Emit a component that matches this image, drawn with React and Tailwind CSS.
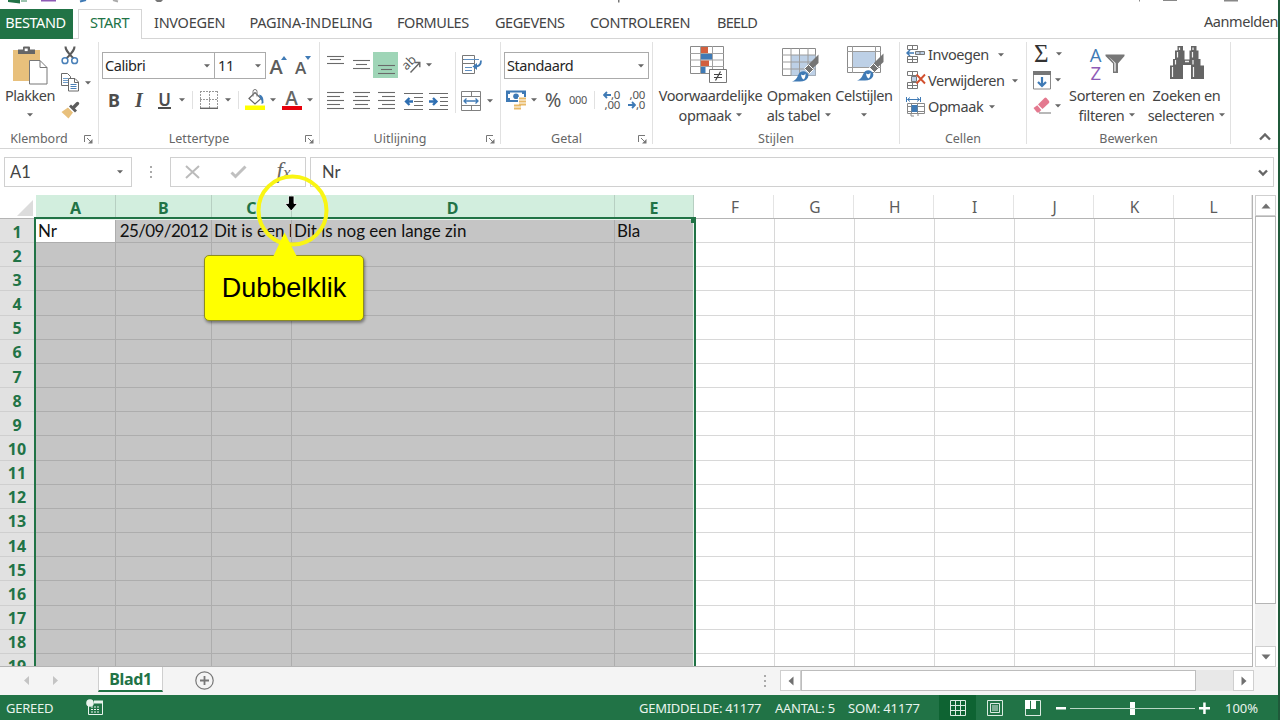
import clsx from "clsx";

const columns = [
    { name: "A", width: "w-20", selected: true },
    { name: "B", width: "w-24", selected: true },
    { name: "C", width: "w-20", selected: true },
    { name: "D", width: "w-[323px]", selected: true },
    { name: "E", width: "w-20", selected: true },
    { name: "F", width: "w-20" },
    { name: "G", width: "w-20" },
    { name: "H", width: "w-20" },
    { name: "I", width: "w-20" },
    { name: "J", width: "w-20" },
    { name: "K", width: "w-20" },
    { name: "L", width: "w-[78px]" },
];

const firstRow = {
    A: "Nr",
    B: "25/09/2012",
    C: "Dit is een lange zin",
    D: "Dit is nog een lange zin",
    E: "Bla",
};

const rows = Array.from({ length: 19 }, (_, i) => i + 1);

const tabs = [
    { label: "INVOEGEN", style: "ml-3 w-[73px] tracking-[-0.02em]" },
    { label: "PAGINA-INDELING", style: "ml-[22.5px] w-[124px] tracking-[-0.015em]" },
    { label: "FORMULES", style: "ml-[23.5px] w-[74px]" },
    { label: "GEGEVENS", style: "ml-6 w-[71px]" },
    { label: "CONTROLEREN", style: "ml-6 w-[103px] tracking-[-0.02em]" },
    { label: "BEELD", style: "ml-[24px] w-[41px] tracking-[-0.05em]" },
];

function Caret({ className }) {
    return (
        <svg width="6" height="4" viewBox="0 0 6 4" className={clsx("shrink-0", className)}>
            <path d="M0 0.3h6L3 3.6z" fill="#666" />
        </svg>
    );
}

function Slot({ w, className, children }) {
    return <div className={clsx("flex shrink-0 items-center justify-center", w, className)}>{children}</div>;
}

function Divider({ className }) {
    return <div className={clsx("w-px shrink-0 bg-[#e1e1e1]", className)} />;
}

function Group({ label, width, launcher, children }) {
    return (
        <div className={clsx("flex shrink-0 items-start", width)}>
            <div className="flex h-[109px] min-w-0 flex-1 flex-col">
                <div className="h-[90px]">{children}</div>
                <div className={clsx("flex h-5 items-center pt-[2px] text-[12.5px] text-[#666]", launcher && "pr-[5px]")}>
                    <span className={clsx("flex-1 text-center", launcher && "pr-[6px]")}>{label}</span>
                    {launcher && (
                        <svg width="9" height="9" viewBox="0 0 9 9" fill="none" stroke="#777">
                            <path d="M0.5 7V0.5H7M3 3l4.5 4.5" />
                            <path d="M8.5 4v4.5H4z" fill="#777" stroke="none" />
                        </svg>
                    )}
                </div>
            </div>
            <Divider className="mt-[3px] h-[102px]" />
        </div>
    );
}

function Lines({ rows, height = 20 }) {
    return (
        <svg width="18" height={height} viewBox={`0 0 18 ${height}`} stroke="#6a6a6a" strokeWidth="1.1">
            {rows.map(([x1, x2, y]) => (
                <path key={y} d={`M${x1} ${y}H${x2}`} />
            ))}
        </svg>
    );
}

function PasteIcon() {
    return (
        <svg width="36" height="39" viewBox="0 0 36 39">
            <path d="M1 4h27v31H1z" fill="#e8c07c" />
            <path d="M6 3.5h5V1.5Q11 0.5 12 0.5h5q1 0 1 1v2h5V8H6z" fill="#666" />
            <path d="M12.7 2.5h3v2.6h-3z" fill="#fff" />
            <path d="M17.5 14.5h10.5l7 7v16.5H17.5z" fill="#fff" stroke="#777" />
            <path d="M28 14.5v7h7" fill="none" stroke="#777" />
        </svg>
    );
}

function ScissorsIcon() {
    return (
        <svg width="18" height="19" viewBox="0 0 18 19" fill="none">
            <path d="M4.5 0.5c0 4 2.5 6 8 12M13.5 0.5c0 4-2.5 6-8 12" stroke="#5a5a5a" strokeWidth="2.1" />
            <circle cx="4" cy="14.7" r="2.9" stroke="#4a80b8" strokeWidth="1.5" />
            <circle cx="13.6" cy="14.7" r="2.9" stroke="#4a80b8" strokeWidth="1.5" />
        </svg>
    );
}

function CopyIcon() {
    return (
        <svg width="18" height="19" viewBox="0 0 18 19" fill="#fff" stroke="#6b6b6b">
            <path d="M0.5 0.5h6l3 3v9h-9z" />
            <path d="M2 5.5h5M2 7.5h5M2 9.5h5" stroke="#6f9cc8" />
            <path d="M7.5 5.5h6.5l3.5 3.5v9h-10z" />
            <path d="M13.5 5.5v4h4" fill="none" />
            <path d="M9.5 11.5h6M9.5 13.5h6M9.5 15.5h6" stroke="#4a80b8" />
        </svg>
    );
}

function BrushIcon() {
    return (
        <svg width="19" height="18" viewBox="0 0 19 18">
            <path d="M0.5 11L7 6.500l5 5L7.500 17.500z" fill="#e8c07c" />
            <path d="M8 5.500l2-2 6 6-2 2z" fill="#5c5c5c" />
            <path d="M12.500 6.500L16.500 2.500" stroke="#5c5c5c" strokeWidth="3.4" strokeLinecap="round" />
            <path d="M7.200 6.200l5.800 5.800" stroke="#fff" />
        </svg>
    );
}

function FontSizeIcon({ down }) {
    return (
        <div className="flex items-start font-['Open_Sans',sans-serif] text-[#5c5c5c]">
            <span className={clsx("font-semibold", down ? "pt-[5px] text-[17px] leading-4" : "pt-[2px] text-[20px] leading-5")}>A</span>
            <svg width="6" height="4" viewBox="0 0 6 4" className={down ? "mt-[1px] -ml-px" : "mt-[1px] -ml-[2px]"}>
                <path d={down ? "M0 0h6L3 4z" : "M0 4h6L3 0z"} fill="#3f7ab5" />
            </svg>
        </div>
    );
}

function BordersIcon() {
    return (
        <svg width="18" height="18" viewBox="0 0 18 18" fill="none" stroke="#999">
            <path d="M0.5 0v17M17.5 0v17M0 0.5h18M9.5 0v17M0 8.5h18" strokeDasharray="2 1" />
            <path d="M0 17.3h18" strokeWidth="1.4" stroke="#666" />
        </svg>
    );
}

function FillIcon() {
    return (
        <svg width="20" height="20" viewBox="0 0 20 20" className="overflow-visible">
            <path d="M0 15.5h20V20H0z" fill="#ff0" />
            <path d="M4 8.5L10 2.5l6 6-6 5.5z" fill="#fff" stroke="#666" strokeWidth="1.2" />
            <path d="M8 6.5V1.5q0-2 2-2t2 2v5" fill="none" stroke="#777" />
            <path d="M14 4.5q5 0.5 4.5 8.5l-2 1q0.5-4-1.5-6z" fill="#3f7ab5" />
        </svg>
    );
}

function FontColorIcon() {
    return (
        <div className="flex w-5 flex-col items-center">
            <span className="font-['Open_Sans',sans-serif] text-[19px] leading-4 font-semibold text-[#666]">A</span>
            <div className="h-[4px] w-5 bg-red-600" />
        </div>
    );
}

function OrientationIcon() {
    return (
        <svg width="20" height="20" viewBox="0 0 20 20" fill="none" stroke="#666" className="overflow-visible">
            <text x="-0.5" y="12" fontSize="12.5" fill="#555" stroke="none" fontFamily="Open Sans" transform="rotate(-45 6 9)">
                ab
            </text>
            <path d="M7.5 17.5L16.5 8M12 7.5h4.8v4.8" strokeWidth="1.4" />
        </svg>
    );
}

function WrapIcon() {
    return (
        <svg width="21" height="20" viewBox="0 0 21 20" fill="none" stroke="#777">
            <path d="M1.5 0.5h12v4h-12zM1.5 4.5h12v4h-12zM1.5 8.5h12v10h-12z" />
            <path d="M3 4.5h15M4 12.5h7M4 15.5h7" stroke="#5e8fc2" />
            <path d="M20 5.5q0 6-6 6" stroke="#3f7ab5" strokeWidth="1.8" />
            <path d="M16 8v7l-4.5-3.5z" fill="#3f7ab5" stroke="none" />
        </svg>
    );
}

function MergeIcon() {
    return (
        <svg width="20" height="20" viewBox="0 0 20 20" fill="none" stroke="#808080">
            <path d="M0.5 0.5h19v19H0.5zM0 5.5h20M0 14.5h20M10.5 0v5M10.5 15v5" />
            <path d="M3 10h14M5.5 7.5L3 10l2.5 2.5M14.5 7.5L17 10l-2.5 2.5" stroke="#3f7ab5" strokeWidth="1.3" />
        </svg>
    );
}

function IndentIcon({ right }) {
    return (
        <svg width="19" height="19" viewBox="0 0 19 19" fill="none" stroke="#6a6a6a">
            <path
                d={
                    right
                        ? "M0 1.5h19M11 5.5h8M11 9.5h8M11 13.5h8M0 17.5h19"
                        : "M0 1.5h19M10 5.5h9M10 9.5h9M10 13.5h9M0 17.5h19"
                }
            />
            <path d={right ? "M0 9.5h7M4 6l3.5 3.5L4 13" : "M2 9.5h7M5.5 6L2 9.5 5.5 13"} stroke="#2f6fb2" strokeWidth="2.3" />
        </svg>
    );
}

function MoneyIcon() {
    return (
        <svg width="21" height="20" viewBox="0 0 21 20">
            <path d="M1 1.5h18v9.5H1z" fill="#fff" stroke="#3f7ab5" strokeWidth="2" />
            <circle cx="10" cy="6.2" r="2.8" fill="#3f7ab5" />
            <path d="M1 1h3v3H1zM16 1h3v3h-3zM1 8h3v3H1z" fill="#3f7ab5" />
            <path d="M12 7h9v9h-9zM7 13h9v7H7z" fill="#fff" />
            <path d="M13 8.5h7M13 11.5h7M13 14.5h7M8 15.5h7M8 18.5h7" stroke="#e8b968" strokeWidth="1.8" />
        </svg>
    );
}

function DecimalIcon({ less }) {
    return (
        <div className="flex w-[18px] flex-col text-[11.5px] leading-[10px] tracking-tight text-[#555]">
            <div className="flex items-center justify-end">
                {!less && <BlueArrow flip />}
                <span>{less ? ",00" : ",0"}</span>
            </div>
            <div className="flex items-center justify-end">
                {less && <BlueArrow />}
                <span>{less ? ",0" : ",00"}</span>
            </div>
        </div>
    );
}

function BlueArrow({ flip }) {
    return (
        <svg
            width="8"
            height="8"
            viewBox="0 0 8 8"
            fill="none"
            stroke="#3f7ab5"
            strokeWidth="1.8"
            className={clsx("shrink-0", flip && "rotate-180")}
        >
            <path d="M0 4h7M4 1l3 3-3 3" />
        </svg>
    );
}

function ConditionalIcon() {
    return (
        <svg width="38" height="38" viewBox="0 0 38 38" fill="none" stroke="#8a8a8a" className="mr-1">
            <path d="M0.5 0.5h33v27h-33z" fill="#fff" />
            <path d="M0 7.5h34M0 14h34M0 20.5h34M10.5 0v28M22.5 0v28" stroke="#a2a2a2" />
            <path d="M11 1h7v6h-7zM11 14.5h8v5.5h-8z" fill="#d2603f" stroke="none" />
            <path d="M11 8h11v5.5H11zM11 21h4.5v6H11z" fill="#3f7ab5" stroke="none" />
            <path d="M19.5 23.5h17v13h-17z" fill="#fff" stroke="#777" />
            <path d="M24 28.5h8M24 31.5h8M30.5 25.5l-5 9" stroke="#444" strokeWidth="1.2" />
        </svg>
    );
}

function PaintBrush() {
    return (
        <g stroke="none">
            <path d="M37.5 8.5v8.5L30.5 23.5l-4-4z" fill="#757575" />
            <path d="M27.5 18.5l5 5-4 4-5-5z" fill="#757575" stroke="#fff" />
            <path d="M11 35.5q4-1 6-6 2-5 7-4 4.5 2 3 6-2 4-8 4z" fill="#3f7ab5" />
            <path d="M20 28.5q3 2 4.5-1 0 5-2 6-2-1-2.5-5z" fill="#fff" />
        </g>
    );
}

function TableIcon() {
    return (
        <svg width="39" height="37" viewBox="0 0 39 37" fill="none" stroke="#8a8a8a" className="ml-[3px]">
            <path d="M1.5 2.5h33v27h-33z" fill="#fff" />
            <path d="M10 9h24.5v20.5H10z" fill="#bdd0e6" stroke="none" />
            <path d="M1 9h34M1 16h34M1 23h34M10 2v28M18.5 2v28M27 2v28" stroke="#9c9c9c" />
            <PaintBrush />
        </svg>
    );
}

function CellStyleIcon() {
    return (
        <svg width="39" height="37" viewBox="0 0 39 37" fill="none" stroke="#8a8a8a" className="ml-[2px]">
            <path d="M1.5 0.5h33v26h-33z" fill="#fff" />
            <path d="M1 5.5h34M1 21.5h34M6.5 0v27M29.5 0v27" stroke="#9c9c9c" />
            <path d="M7 6h22v15H7z" fill="#bdd0e6" stroke="none" />
            <g transform="translate(0 -1)">
                <PaintBrush />
            </g>
        </svg>
    );
}

function InsertIcon() {
    return (
        <svg width="20" height="19" viewBox="0 0 20 19" fill="none" stroke="#777">
            <path d="M1.5 0.5h10v4h-10zM6.5 0v4M1.5 11.5h10v6h-10zM6.5 11v7M1.5 14.5h10" />
            <path d="M9.5 6.5h9v3h-9zM14 6v4" fill="#bdd0e6" />
            <path d="M1 8h7M4 5L1 8l3 3" stroke="#3f7ab5" strokeWidth="1.5" />
        </svg>
    );
}

function DeleteIcon() {
    return (
        <svg width="20" height="19" viewBox="0 0 20 19" fill="none" stroke="#777">
            <path d="M1.5 0.5h10v4h-10zM6.5 0v4M1.5 11.5h10v6h-10zM6.5 11v7M1.5 14.5h10" />
            <path d="M5.5 5.5h5v5h-5z" fill="#bdd0e6" />
            <path d="M10.5 3.5l8.5 9M19 3.5l-8.5 9" stroke="#d2502f" strokeWidth="1.9" />
        </svg>
    );
}

function FormatIcon() {
    return (
        <svg width="20" height="20" viewBox="0 0 20 20" fill="none" stroke="#888">
            <path d="M1.5 2.5h12M4 0.5l-2.5 2 2.5 2M11 0.5l2.5 2-2.5 2M0.5 0v5M14.5 0v5" stroke="#3f7ab5" />
            <path d="M1.5 6.5h17v10h-17zM5.5 6v11M11.5 6v11M1 9.5h18M1 14.5h18M5 17v2h3M12 17v2" />
            <path d="M5.5 8h6v7h-6z" fill="#3f7ab5" stroke="none" />
        </svg>
    );
}

function SortIcon() {
    return (
        <div className="flex h-[35px] w-[37px] gap-[2px]">
            <div className="flex w-[14px] flex-col items-center font-['Open_Sans',sans-serif] text-[18.5px] leading-[17.5px] font-medium">
                <span className="text-[#3f7ab5]">A</span>
                <span className="text-[#8e5bb5]">Z</span>
            </div>
            <svg width="20" height="20" viewBox="0 0 20 20" className="mt-[8px]">
                <path d="M0.5 0.5h19v1.5l-6.5 7.5v9.5H8V9.5L0.5 2z" fill="#777" />
                <path d="M3.5 2.5l5.8 6.5v8.5h1.4V9z" fill="#eee" />
            </svg>
        </div>
    );
}

function BinocularsIcon() {
    return (
        <svg width="36" height="34" viewBox="0 0 36 34" fill="#656565">
            <path d="M8.5 0h5.5v4.5h1.5v9h5v-9H22V0h5.5v4.5h2v8.5h2v6.5H35V33H22V19h-8v14H1V19.5h3V13h2V4.5h2.5z" />
            <path
                d="M3.5 21v10M6.5 14v4.5M8.5 6v5.5M10.5 1.5V4M24.5 21v10M24 14v4.5M23.5 6v5.5M24 1.5V4"
                stroke="#f2f2f2"
                strokeWidth="1.2"
            />
            <path d="M16 15.5h4" stroke="#eee" strokeWidth="1.5" />
        </svg>
    );
}

function BigButton({ icon, first, second, className }) {
    return (
        <div className={clsx("flex flex-col items-center text-[14.5px] whitespace-nowrap", className)}>
            <div className="flex h-[40px] items-start">{icon}</div>
            <span className="-mt-px leading-5">{first}</span>
            <div className="flex h-5 items-center gap-[5px]">
                {second && <span className="leading-5">{second}</span>}
                <Caret />
            </div>
        </div>
    );
}

function Ribbon() {
    return (
        <div className="flex h-[110px] border-b border-[#d5d5d5] text-[#444]">
            <Group label="Klembord" width="w-[99px]" launcher>
                <div className="flex pt-[7px]">
                    <BigButton icon={<PasteIcon />} first="Plakken" className="w-[61px] pr-px tracking-[-0.03em]" />
                    <div className="flex flex-col items-start">
                        <ScissorsIcon />
                        <div className="mt-2 flex items-center gap-[6px]">
                            <CopyIcon />
                            <Caret />
                        </div>
                        <div className="mt-[9px]">
                            <BrushIcon />
                        </div>
                    </div>
                </div>
            </Group>
            <Group label="Lettertype" width="w-[221px]" launcher>
                <div className="flex pt-[13px] pl-[3px] text-[14.5px] text-[#262626]">
                    <div className="flex h-[27px] w-[113px] items-center justify-between border border-[#ababab] pr-1 pl-[2px] tracking-[-0.03em]">
                        Calibri <Caret />
                    </div>
                    <div className="-ml-px flex h-[27px] w-[52px] items-center justify-between border border-[#ababab] pr-1 pl-[3px] tracking-[-0.02em]">
                        11 <Caret />
                    </div>
                    <Slot w="w-[24px]">
                        <FontSizeIcon />
                    </Slot>
                    <Slot w="w-[26px]">
                        <FontSizeIcon down />
                    </Slot>
                </div>
                <div className="mt-[8px] flex h-[26px] items-center pl-[2px] text-[18px] text-[#4d4d4d]">
                    <Slot w="w-[26px]">
                        <b>B</b>
                    </Slot>
                    <Slot w="w-[24px]">
                        <i className="font-['Liberation_Serif',serif] text-[20px] font-bold">I</i>
                    </Slot>
                    <Slot w="w-[27px]">
                        <span className="border-b-2 border-[#4d4d4d] text-[17px] leading-[15px] font-semibold">U</span>
                    </Slot>
                    <Slot w="w-[8px]">
                        <Caret />
                    </Slot>
                    <Divider className="ml-[6px] h-[18px]" />
                    <Slot w="w-[32px]">
                        <BordersIcon />
                    </Slot>
                    <Slot w="w-[6px]">
                        <Caret />
                    </Slot>
                    <Divider className="ml-[7px] h-[18px]" />
                    <Slot w="w-[31px]">
                        <FillIcon />
                    </Slot>
                    <Slot w="w-[6px]">
                        <Caret />
                    </Slot>
                    <Slot w="w-[31px]">
                        <FontColorIcon />
                    </Slot>
                    <Slot w="w-[6px]">
                        <Caret />
                    </Slot>
                </div>
            </Group>
            <Group label="Uitlijning" width="w-[181px]" launcher>
                <div className="flex pt-[13px]">
                    <div className="flex w-[135px] flex-col">
                        <div className="flex h-[26px] items-center">
                            <Slot w="w-[28px]" className="pl-[2px]">
                                <Lines rows={[[1, 18, 4.5], [4, 15, 7.5], [1, 18, 11.5]]} height={26} />
                            </Slot>
                            <Slot w="w-[25px]">
                                <Lines rows={[[1, 18, 8.5], [4, 15, 12.5], [1, 18, 16.5]]} height={26} />
                            </Slot>
                            <Slot w="w-[25px]" className="h-[26px] bg-[#9fd5b7]">
                                <Lines rows={[[1, 18, 13.5], [4, 15, 17.5], [1, 18, 21.5]]} height={26} />
                            </Slot>
                            <Slot w="w-[29px]">
                                <OrientationIcon />
                            </Slot>
                            <Slot w="w-[4px]">
                                <Caret />
                            </Slot>
                        </div>
                        <div className="mt-[10px] flex h-[26px] items-center">
                            <Slot w="w-[28px]" className="pl-[2px]">
                                <Lines rows={[[1, 18, 1.5], [1, 14, 5.5], [1, 18, 9.5], [1, 14, 13.5], [1, 18, 17.5]]} />
                            </Slot>
                            <Slot w="w-[25px]">
                                <Lines rows={[[1, 18, 1.5], [3, 16, 5.5], [1, 18, 9.5], [3, 16, 13.5], [1, 18, 17.5]]} />
                            </Slot>
                            <Slot w="w-[25px]">
                                <Lines rows={[[1, 18, 1.5], [5, 18, 5.5], [1, 18, 9.5], [5, 18, 13.5], [1, 18, 17.5]]} />
                            </Slot>
                            <Slot w="w-[30px]">
                                <IndentIcon />
                            </Slot>
                            <Slot w="w-[20px]">
                                <IndentIcon right />
                            </Slot>
                        </div>
                    </div>
                    <Divider className="h-[61px]" />
                    <div className="flex flex-col pl-[5px]">
                        <div className="flex h-[26px] items-center">
                            <WrapIcon />
                        </div>
                        <div className="mt-[10px] flex h-[26px] items-center gap-[6px]">
                            <MergeIcon />
                            <Caret />
                        </div>
                    </div>
                </div>
            </Group>
            <Group label="Getal" width="w-[152px]" launcher>
                <div className="flex pt-[13px] pl-[3px]">
                    <div className="flex h-[27px] w-[145px] items-center justify-between border border-[#ababab] pr-1 pl-[2px] text-[14.5px] tracking-[-0.03em] text-[#262626]">
                        Standaard <Caret />
                    </div>
                </div>
                <div className="mt-[8px] flex h-[26px] items-center pl-[4px]">
                    <Slot w="w-[22px]">
                        <MoneyIcon />
                    </Slot>
                    <Slot w="w-[14px]">
                        <Caret />
                    </Slot>
                    <Slot w="w-[24px]" className="text-[20px] text-[#555]">
                        %
                    </Slot>
                    <Slot w="w-[26px]" className="text-[11px] tracking-[-0.03em] text-[#555]">
                        000
                    </Slot>
                    <Divider className="ml-[3px] h-[18px]" />
                    <Slot w="w-[32px]">
                        <DecimalIcon />
                    </Slot>
                    <Slot w="w-[18px]">
                        <DecimalIcon less />
                    </Slot>
                </div>
            </Group>
            <Group label="Stijlen" width="w-[247px]">
                <div className="flex pt-[7px] pl-[3px]">
                    <BigButton icon={<ConditionalIcon />} first="Voorwaardelijke" second="opmaak" className="w-[109px] tracking-[-0.027em]" />
                    <BigButton icon={<TableIcon />} first="Opmaken" second="als tabel" className="w-[68px] tracking-[-0.025em]" />
                    <BigButton icon={<CellStyleIcon />} first="Celstijlen" className="w-[62px] tracking-[-0.03em]" />
                </div>
            </Group>
            <Group label="Cellen" width="w-[127px]">
                <div className="flex flex-col gap-[6px] pt-[5.5px] pl-[6px] text-[14.5px] tracking-[-0.03em]">
                    <div className="flex h-5 items-center">
                        <InsertIcon />
                        <span className="ml-[2px] w-[70px]">Invoegen</span>
                        <Caret />
                    </div>
                    <div className="flex h-5 items-center">
                        <DeleteIcon />
                        <span className="ml-[2px] w-[84px]">Verwijderen</span>
                        <Caret />
                    </div>
                    <div className="flex h-5 items-center">
                        <FormatIcon />
                        <span className="ml-[2px] w-[61px]">Opmaak</span>
                        <Caret />
                    </div>
                </div>
            </Group>
            <Group label="Bewerken" width="w-[204px]">
                <div className="flex pt-[7px]">
                    <div className="-mt-[2px] flex w-[40px] flex-col gap-[6px] pl-[6px]">
                        <div className="flex h-5 items-center gap-[5px]">
                            <span className="w-[18px] pl-px font-['Liberation_Serif',serif] text-[25px] leading-5 font-medium text-[#333]">Σ</span>
                            <Caret />
                        </div>
                        <div className="flex h-5 items-center gap-[4px]">
                            <svg width="18" height="19" viewBox="0 0 18 19" fill="none">
                                <path d="M0.5 0.5h17v17.5h-17z" stroke="#888" />
                                <path d="M0 0h18v4H0z" fill="#777" />
                                <path d="M9 6v9M5 11l4 4 4-4" stroke="#3f7ab5" strokeWidth="2.2" />
                            </svg>
                            <Caret />
                        </div>
                        <div className="flex h-5 items-center gap-[4px]">
                            <svg width="18" height="18" viewBox="0 0 18 18">
                                <path d="M5 7.5L11.5 1q1-1 2 0l2.5 3q0.700 1 0 2L9.5 12z" fill="#e4798f" />
                                <path d="M0.5 11L4.3 8.3l4 4.7-2.3 2.5H4z" fill="#e4798f" />
                                <path d="M6 16h12" stroke="#888" strokeWidth="1.2" />
                            </svg>
                            <Caret />
                        </div>
                    </div>
                    <BigButton icon={<SortIcon />} first="Sorteren en" second="filteren" className="w-[80px] tracking-[-0.025em]" />
                    <BigButton icon={<BinocularsIcon />} first="Zoeken en" second="selecteren" className="w-[79px] tracking-[-0.025em]" />
                </div>
            </Group>
            <div className="flex flex-1 items-end justify-center pr-[22px] pb-[7px] pl-7">
                <svg width="12" height="8" viewBox="0 0 12 8" fill="none" stroke="#666" strokeWidth="2.4" className="shrink-0">
                    <path d="M1 6.5l5-5 5 5" />
                </svg>
            </div>
        </div>
    );
}

function TitleStrip() {
    return (
        <div className="flex h-[9px] items-start">
            <svg width="170" height="4" viewBox="0 0 170 4">
                <path d="M8 0h12v3.5L8 2z" fill="#217346" />
                <path d="M21 0h6v2h-6z" fill="#9cc4ae" />
                <path d="M41 0h15v1.5H41z" fill="#8e5bb5" />
                <path d="M80 1.5l6-1.5" stroke="#3f7ab5" strokeWidth="2" />
                <path d="M113 0l5 1.5" stroke="#aaa" strokeWidth="2" />
                <path d="M155 0h8l-2 2h-4z" fill="#777" />
            </svg>
            <svg width="1108" height="4" viewBox="0 0 1108 4">
                <path d="M448 0h1.5v2.5H448z" fill="#777" />
                <path d="M969 0h1v1.5h-1zM993 0h14v1h-14zM1054 0h14v1.5h-14z" fill="#888" />
            </svg>
        </div>
    );
}

function Tabs() {
    return (
        <div className="flex h-[30px] items-stretch text-[14.5px] tracking-[-0.03em] whitespace-nowrap text-[#444]">
            <div className="flex w-[73px] items-center justify-center bg-[#217346] pr-[2px] pb-[2px] text-white">BESTAND</div>
            <div className="w-[5px] border-b border-[#d5d5d5]" />
            <div className="flex w-[64px] items-center justify-center border-x border-t border-[#d5d5d5] pr-px pb-[3px] text-[#217346]">START</div>
            <div className="flex flex-1 items-center border-b border-[#d5d5d5] pb-px">
                {tabs.map((tab) => (
                    <span key={tab.label} className={tab.style}>
                        {tab.label}
                    </span>
                ))}
                <span className="ml-auto pb-[2px] text-[14.5px]">Aanmelden</span>
            </div>
        </div>
    );
}

function FormulaBar() {
    return (
        <div className="flex h-[46px] items-start pt-2 pr-[4px] pl-[4px] font-['Lato',sans-serif] text-[#444]">
            <div className="flex h-[30px] w-[128px] items-center justify-between border border-[#d0d0d0] pr-[8px] pl-[5px] text-[16.5px]">
                A1 <Caret />
            </div>
            <div className="flex h-[30px] w-[38px] flex-col items-center justify-center gap-[3px]">
                <div className="size-[2px] bg-[#aaa]" />
                <div className="size-[2px] bg-[#aaa]" />
                <div className="size-[2px] bg-[#aaa]" />
            </div>
            <div className="flex h-[30px] w-[136px] items-center border border-[#d0d0d0]">
                <Slot w="w-[43px]">
                    <svg width="15" height="14" viewBox="0 0 15 14" stroke="#bbb" strokeWidth="2">
                        <path d="M1 1l13 12M14 1L1 13" />
                    </svg>
                </Slot>
                <Slot w="w-[49px]">
                    <svg width="17" height="14" viewBox="0 0 17 14" fill="none" stroke="#c0c0c0" strokeWidth="3">
                        <path d="M1.5 7.5l4 4L15.5 1.5" />
                    </svg>
                </Slot>
                <Slot w="w-[41px]">
                    <i className="font-['Liberation_Serif',serif] text-[23px] leading-6 text-[#666]">
                        f<span className="text-[17px]">x</span>
                    </i>
                </Slot>
            </div>
            <div className="ml-[4px] flex h-[30px] flex-1 items-center justify-between border border-[#d0d0d0] pr-[5px] pl-[11px] text-[16.5px]">
                Nr
                <svg width="10" height="8" viewBox="0 0 10 8" fill="none" stroke="#666" strokeWidth="2.4" className="mt-[2px]">
                    <path d="M1 1.5l4 4 4-4" />
                </svg>
            </div>
        </div>
    );
}

function ColumnHeaders() {
    return (
        <div className="flex h-6 border-b border-[#b4b4b4]">
            <div className="flex w-9 items-end justify-end pr-[3px] pb-[2px]">
                <svg width="16" height="16" viewBox="0 0 16 16">
                    <path d="M16 0v16H0z" fill="#dcdcdc" />
                </svg>
            </div>
            {columns.map((col) => (
                <div
                    key={col.name}
                    className={clsx(
                        "flex items-center justify-center border-r pt-[3px]",
                        col.width,
                        col.selected
                            ? "border-[#b7cfc2] bg-[#d2eede] text-[16px] font-bold text-[#217346]"
                            : "border-[#e4e4e4] pl-[2px] text-[15.5px] text-[#5c5c5c]"
                    )}
                >
                    {col.name}
                </div>
            ))}
        </div>
    );
}

function SheetCell({ col, row }) {
    const active = col.name === "A" && row === 1;
    return (
        <div
            className={clsx(
                "flex shrink-0 items-center overflow-hidden border-r border-b pt-px font-['Lato',sans-serif] text-[17px] whitespace-nowrap text-[#111]",
                col.width,
                col.name === "B" ? "justify-end pr-[3px] tracking-[-0.035em]" : "pl-[2px]",
                col.selected ? "border-[#adadad]" : "border-[#d8d8d8]",
                active && "bg-white",
                col.selected && !active && "bg-[#c5c5c5]"
            )}
        >
            {row === 1 && firstRow[col.name]}
        </div>
    );
}

function Sheet() {
    return (
        <div className="relative w-[1253px] overflow-hidden border-r border-b border-[#b4b4b4] bg-white">
            <ColumnHeaders />
            {rows.map((row) => (
                <div key={row} className="flex h-[24.17px]">
                    <div className="flex w-9 shrink-0 items-center justify-center border-b border-[#cfcfcf] bg-[#e1e1e1] pt-[2px] pr-[2px] text-[16px] font-bold text-[#217346]">
                        {row}
                    </div>
                    {columns.map((col) => (
                        <SheetCell key={col.name} col={col} row={row} />
                    ))}
                </div>
            ))}
            {/* selection frame */}
            <div className="pointer-events-none absolute top-[22px] left-[34px] h-[460px] w-[662px] border-2 border-b-0 border-[#217346]">
                <div className="h-full border-t border-r border-[#e8f3ec]" />
                <div className="absolute -top-px -right-[2px] size-[5px] bg-[#217346]" />
            </div>
        </div>
    );
}

function ScrollArrow({ d, className }) {
    return (
        <div className={clsx("flex h-[21px] w-[21px] shrink-0 items-center justify-center border border-[#cfcfcf] bg-white", className)}>
            <svg width="10" height="10" viewBox="0 0 10 10">
                <path d={d} fill="#707070" />
            </svg>
        </div>
    );
}

function VerticalScroll() {
    return (
        <div className="ml-[2px] flex w-[21px] flex-col bg-[#f1f1f1]">
            <ScrollArrow d="M0.5 7.5h9L5 2.5z" />
            <div className="h-[388px] border border-[#b5b5b5] bg-white" />
            <ScrollArrow d="M0.5 2.5h9L5 7.5z" className="mt-auto" />
        </div>
    );
}

function SheetTabs() {
    return (
        <div className="flex h-7 items-start bg-[#f4f4f4]">
            <svg width="98" height="27" viewBox="0 0 98 27" fill="#c4c4c4">
                <path d="M29 9v9l-5-4.5zM53 9v9l5-4.5z" />
            </svg>
            <div className="flex h-[25px] w-[65px] items-center justify-center border-x border-b-2 border-x-[#cfcfcf] border-b-[#217346] bg-white pt-px text-[16px] font-bold tracking-[-0.02em] text-[#217346]">
                Blad1
            </div>
            <svg width="19" height="19" viewBox="0 0 19 19" fill="none" stroke="#777" className="mt-1 ml-8">
                <circle cx="9.5" cy="9.5" r="8.7" strokeWidth="1.2" />
                <path d="M5 9.5h9M9.5 5v9" strokeWidth="1.8" />
            </svg>
            <div className="mt-[8px] ml-[550px] flex w-[3px] flex-col gap-[3px]">
                <div className="size-[2px] bg-[#aaa]" />
                <div className="size-[2px] bg-[#aaa]" />
                <div className="size-[2px] bg-[#aaa]" />
            </div>
            <div className="mt-[3px] ml-[13px] flex w-[474px] bg-[#e8e8e8]">
                <ScrollArrow d="M7.5 0.5v9L2.5 5z" />
                <div className="w-[395px] border border-[#bdbdbd] bg-white" />
                <ScrollArrow d="M2.5 0.5v9L7.5 5z" className="ml-auto" />
            </div>
        </div>
    );
}

function StatusBar() {
    return (
        <div className="flex h-[25px] items-center bg-[#217346] text-[13px] tracking-[-0.02em] whitespace-nowrap text-[#e9f3ed]">
            <span className="w-[86px] pt-[2px] pl-[6px]">GEREED</span>
            <svg width="18" height="17" viewBox="0 0 18 17" fill="none" stroke="#e9f3ed">
                <path d="M2.5 4v11.5h14v-13H8" />
                <path d="M8 3h9" strokeWidth="3" />
                <path d="M5 8h9M5 10.5h9M5 13h9" strokeDasharray="2 1" />
                <circle cx="4" cy="4" r="3.8" fill="#e9f3ed" stroke="none" />
            </svg>
            <span className="ml-auto w-[136px] pt-[2px]">GEMIDDELDE: 41177</span>
            <span className="w-[73px] pt-[2px]">AANTAL: 5</span>
            <span className="w-[91px] pt-[2px] tracking-[-0.01em]">SOM: 41177</span>
            <div className="flex h-full w-[37px] items-center justify-center bg-[#0e6332]">
                <svg width="16" height="16" viewBox="0 0 16 16" fill="none" stroke="#dcebe2">
                    <path d="M0.5 0.5h15v15h-15zM5.5 0v16M10.5 0v16M0 5.5h16M0 10.5h16" />
                </svg>
            </div>
            <Slot w="w-[38px]">
                <svg width="16" height="16" viewBox="0 0 16 16" fill="none" stroke="#dcebe2">
                    <path d="M0.5 0.5h15v15h-15zM3.5 3.5h9v9h-9zM5 6h6M5 8h6M5 10h6" />
                </svg>
            </Slot>
            <Slot w="w-[37px]">
                <svg width="16" height="16" viewBox="0 0 16 16" fill="none" stroke="#dcebe2">
                    <path d="M0.5 0.5h15v15h-15z" />
                    <path d="M0 0h5v9H0zM6 0h5v9H6z" fill="#fff" stroke="none" />
                </svg>
            </Slot>
            <svg width="156" height="16" viewBox="0 0 156 16" className="ml-[5px]">
                <path d="M0 7h10v2.5H0zM143 7h11v2.5h-11zM147.2 2.5h2.5V14h-2.5zM74 2h5v13h-5z" fill="#fff" />
                <path d="M14 8.5h125" stroke="#b9d6c5" strokeWidth="1.2" />
            </svg>
            <span className="w-[66px] pt-[2px] pl-[13px] tracking-normal">100%</span>
        </div>
    );
}

function Callout() {
    return (
        <>
            <svg width="74" height="74" viewBox="0 0 74 74" className="absolute top-[174px] left-[255px]" fill="none">
                <circle cx="37.5" cy="36.5" r="34" stroke="#f9f514" strokeWidth="4" />
            </svg>
            <svg width="14" height="18" viewBox="0 0 14 18" className="absolute top-[195px] left-[284px]">
                <path d="M4.5 1h5.5v7.5h3.5L7.2 16 1 8.5h3.5z" fill="#000" stroke="#fff" strokeWidth="0.8" />
            </svg>
            <div className="absolute top-[255px] left-[204px] flex h-[66px] w-[160px] items-center justify-center rounded-[5px] border border-[#8c8c20] bg-[#ffff00] font-['Liberation_Sans',sans-serif] text-[27px] text-black shadow-[1px_2px_3px_rgba(0,0,0,0.4)]">
                Dubbelklik
            </div>
            <svg width="26" height="26" viewBox="0 0 26 26" className="absolute top-[232px] left-[272px]">
                <path d="M1 25L12.5 0.5 25 25z" fill="#ffff00" />
            </svg>
        </>
    );
}

export default function App() {
    return (
        <div className="relative flex h-[720px] w-[1280px] overflow-hidden bg-white font-['Noto_Sans',sans-serif]">
            <div className="flex w-[1278px] flex-col">
                <TitleStrip />
                <Tabs />
                <Ribbon />
                <FormulaBar />
                <div className="flex h-[472px] bg-[#fdfdfd]">
                    <Sheet />
                    <VerticalScroll />
                </div>
                <SheetTabs />
                <StatusBar />
            </div>
            <div className="w-[2px] bg-[#1f5a3a]" />
            <Callout />
        </div>
    );
}
